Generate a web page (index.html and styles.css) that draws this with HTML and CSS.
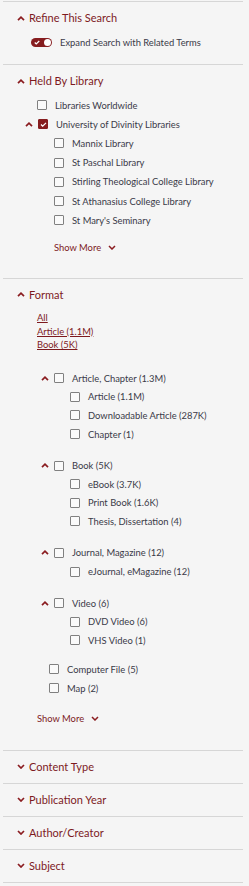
FILE: index.html
```html
<!DOCTYPE html>
<html>
<head>
<meta charset="utf-8">
<link rel="stylesheet" href="styles.css">
</head>
<body>
<div class="panel">
  <section class="sec sec-first">
    <h2 class="head"><svg class="chev" viewBox="0 0 8 5"><path d="M1 4.2 L4 1.2 L7 4.2"/></svg>Refine This Search</h2>
    <div class="toggle-row">
      <span class="toggle"><svg class="tcheck" viewBox="0 0 8 6"><path d="M1 3 L3 5 L7 1"/></svg><span class="knob"></span></span>
      <span class="label">Expand Search with Related Terms</span>
    </div>
  </section>

  <section class="sec sec-held">
    <h2 class="head"><svg class="chev" viewBox="0 0 8 5"><path d="M1 4.2 L4 1.2 L7 4.2"/></svg>Held By Library</h2>
    <ul class="list l1">
      <li class="row"><span class="cb"></span><span class="label">Libraries Worldwide</span></li>
      <li class="row has-chev"><svg class="chev small" viewBox="0 0 8 5"><path d="M1 4.2 L4 1.2 L7 4.2"/></svg><span class="cb checked"><svg viewBox="0 0 8 6"><path d="M1 3 L3 5 L7 1"/></svg></span><span class="label">University of Divinity Libraries</span></li>
    </ul>
    <ul class="list l2">
      <li class="row"><span class="cb"></span><span class="label">Mannix Library</span></li>
      <li class="row"><span class="cb"></span><span class="label">St Paschal Library</span></li>
      <li class="row"><span class="cb"></span><span class="label">Stirling Theological College Library</span></li>
      <li class="row"><span class="cb"></span><span class="label">St Athanasius College Library</span></li>
      <li class="row"><span class="cb"></span><span class="label">St Mary's Seminary</span></li>
    </ul>
    <div class="more more-held">Show More<svg class="mchev" viewBox="0 0 8 5"><path d="M1 1 L4 4 L7 1"/></svg></div>
  </section>

  <section class="sec sec-format">
    <h2 class="head"><svg class="chev" viewBox="0 0 8 5"><path d="M1 4.2 L4 1.2 L7 4.2"/></svg>Format</h2>
    <div class="links">
      <a class="lnk">All</a>
      <a class="lnk">Article (1.1M)</a>
      <a class="lnk">Book (5K)</a>
    </div>
    <div class="groups">
      <div class="group">
        <div class="row grow"><svg class="chev small" viewBox="0 0 8 5"><path d="M1 4.2 L4 1.2 L7 4.2"/></svg><span class="cb"></span><span class="label">Article, Chapter (1.3M)</span></div>
        <div class="row sub"><span class="cb"></span><span class="label">Article (1.1M)</span></div>
        <div class="row sub"><span class="cb"></span><span class="label">Downloadable Article (287K)</span></div>
        <div class="row sub"><span class="cb"></span><span class="label">Chapter (1)</span></div>
      </div>
      <div class="group">
        <div class="row grow"><svg class="chev small" viewBox="0 0 8 5"><path d="M1 4.2 L4 1.2 L7 4.2"/></svg><span class="cb"></span><span class="label">Book (5K)</span></div>
        <div class="row sub"><span class="cb"></span><span class="label">eBook (3.7K)</span></div>
        <div class="row sub"><span class="cb"></span><span class="label">Print Book (1.6K)</span></div>
        <div class="row sub"><span class="cb"></span><span class="label">Thesis, Dissertation (4)</span></div>
      </div>
      <div class="group">
        <div class="row grow"><svg class="chev small" viewBox="0 0 8 5"><path d="M1 4.2 L4 1.2 L7 4.2"/></svg><span class="cb"></span><span class="label">Journal, Magazine (12)</span></div>
        <div class="row sub"><span class="cb"></span><span class="label">eJournal, eMagazine (12)</span></div>
      </div>
      <div class="group">
        <div class="row grow"><svg class="chev small" viewBox="0 0 8 5"><path d="M1 4.2 L4 1.2 L7 4.2"/></svg><span class="cb"></span><span class="label">Video (6)</span></div>
        <div class="row sub"><span class="cb"></span><span class="label">DVD Video (6)</span></div>
        <div class="row sub"><span class="cb"></span><span class="label">VHS Video (1)</span></div>
      </div>
      <div class="group solo">
        <div class="row"><span class="cb"></span><span class="label">Computer File (5)</span></div>
        <div class="row"><span class="cb"></span><span class="label">Map (2)</span></div>
      </div>
    </div>
    <div class="more more-format">Show More<svg class="mchev" viewBox="0 0 8 5"><path d="M1 1 L4 4 L7 1"/></svg></div>
  </section>

  <section class="sec collapsed">
    <h2 class="head"><svg class="chev" viewBox="0 0 8 5"><path d="M1 1 L4 4 L7 1"/></svg>Content Type</h2>
  </section>
  <section class="sec collapsed">
    <h2 class="head"><svg class="chev" viewBox="0 0 8 5"><path d="M1 1 L4 4 L7 1"/></svg>Publication Year</h2>
  </section>
  <section class="sec collapsed">
    <h2 class="head"><svg class="chev" viewBox="0 0 8 5"><path d="M1 1 L4 4 L7 1"/></svg>Author/Creator</h2>
  </section>
  <section class="sec collapsed">
    <h2 class="head"><svg class="chev" viewBox="0 0 8 5"><path d="M1 1 L4 4 L7 1"/></svg>Subject</h2>
  </section>
</div>
</body>
</html>
```
FILE: styles.css
```css
html, body {
  margin: 0;
  padding: 0;
  background: #f5f5f5;
}
body {
  font-family: Lato, "Open Sans", sans-serif;
  color: #3a3a48;
  width: 249px;
}
.panel {
  padding: 1px 6px 0 3px;
}
.sec {
  border-bottom: 1px solid #d6d6d6;
}
.sec-first {
  border-top: 1px solid #d6d6d6;
  padding: 8px 0 14px;
}
.head {
  margin: 0;
  display: flex;
  align-items: center;
  font-size: 11px;
  font-weight: 400;
  line-height: 16px;
  color: #7d1a1e;
  padding-left: 14px;
}
.chev {
  width: 8px;
  height: 5px;
  margin-right: 4px;
  fill: none;
  stroke: #8a1c20;
  stroke-width: 1.7;
  flex: none;
}
.toggle-row {
  display: flex;
  align-items: center;
  margin-top: 8px;
  padding-left: 28px;
  height: 16px;
}
.toggle {
  position: relative;
  width: 21px;
  height: 9px;
  border-radius: 5px;
  background: #861d1f;
  margin-right: 8px;
  flex: none;
}
.tcheck {
  position: absolute;
  left: 3px;
  top: 2px;
  width: 6px;
  height: 5px;
  fill: none;
  stroke: #fff;
  stroke-width: 1.6;
}
.knob {
  position: absolute;
  right: 1px;
  top: 1px;
  width: 7px;
  height: 7px;
  border-radius: 50%;
  background: #fff;
}
.label {
  font-size: 9.4px;
  white-space: nowrap;
}
.sec-held {
  padding: 8px 0 22px;
}
.list {
  list-style: none;
  margin: 0;
  padding: 0;
}
.l1 {
  margin-top: 6.5px;
  padding-left: 34px;
}
.l2 {
  padding-left: 51px;
}
.row {
  display: flex;
  align-items: center;
  height: 19.2px;
}
.l1 .has-chev {
  margin-left: -12px;
}
.chev.small {
  margin-right: 5px;
}
.cb {
  width: 8px;
  height: 8px;
  border: 1.3px solid #808080;
  border-radius: 1px;
  background: #fafafa;
  margin-right: 8px;
  flex: none;
  display: flex;
  align-items: center;
  justify-content: center;
}
.cb.checked {
  background: #861d1f;
  border-color: #861d1f;
}
.cb.checked svg {
  width: 7px;
  height: 5px;
  fill: none;
  stroke: #fff;
  stroke-width: 1.5;
}
.more {
  display: flex;
  align-items: center;
  font-size: 9.4px;
  line-height: 16px;
  color: #7d1a1e;
}
.mchev {
  width: 8px;
  height: 5px;
  margin-left: 7px;
  fill: none;
  stroke: #8a1c20;
  stroke-width: 1.5;
}
.more-held {
  margin-top: 10px;
  padding-left: 51px;
}
.sec-format {
  padding: 8px 0 23px;
}
.links {
  margin-top: 8px;
  padding-left: 34px;
  display: flex;
  flex-direction: column;
  align-items: flex-start;
}
.lnk {
  font-size: 9.4px;
  line-height: 13.7px;
  color: #7d1a1e;
  text-decoration: underline;
}
.groups {
  margin-top: 17px;
  padding-left: 38px;
  display: flex;
  flex-direction: column;
  gap: 13px;
}
.grow {
  height: 18.6px;
}
.sub {
  padding-left: 29px;
  height: 18.6px;
}
.solo {
  padding-left: 8px;
  margin-top: -3px;
}
.group {
  display: flex;
  flex-direction: column;
}
.more-format {
  margin-top: 12.5px;
  padding-left: 34px;
}
.collapsed {
  padding: 8px 0 8px;
}
```
